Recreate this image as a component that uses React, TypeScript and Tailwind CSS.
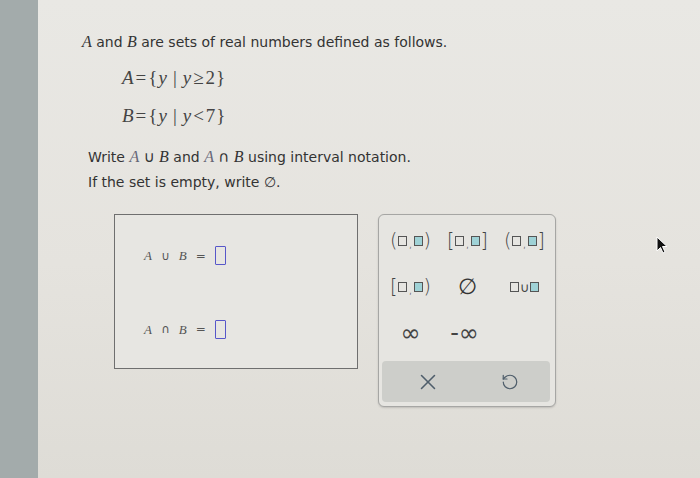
import { X, RotateCcw } from 'lucide-react';

const serif = "font-['Liberation_Serif',serif]";

function Slot({ filled = false }: { filled?: boolean }) {
  return (
    <span
      className={`inline-block w-[9px] h-[10px] border-[1.4px] border-[#555] ${filled ? 'bg-[#9fd2d6]' : 'bg-transparent'}`}
    />
  );
}

function Interval({ left, right }: { left: string; right: string }) {
  return (
    <span className="flex items-center text-[19px] leading-none text-[#444] font-['DejaVu_Sans',sans-serif] font-light">
      <span className="-mt-[2px]">{left}</span>
      <span className="flex items-center mx-[1px]">
        <Slot />
        <span className="text-[13px] leading-[10px] h-[10px] flex items-end translate-y-[3px] mx-[1px]">,</span>
        <Slot filled />
      </span>
      <span className="-mt-[2px]">{right}</span>
    </span>
  );
}

function Answer({ op }: { op: string }) {
  return (
    <div className={`flex items-center gap-[9px] text-[13px] text-[#555] ${serif}`}>
      <span className="italic">A</span>
      <span className="font-['DejaVu_Sans',sans-serif] text-[12px]">{op}</span>
      <span className="italic">B</span>
      <span className="font-['DejaVu_Sans',sans-serif] text-[12px]">=</span>
      <span className="inline-block w-[11px] h-[19px] border-[1.5px] border-[#5757c9] rounded-[1px]" />
    </div>
  );
}

function SetDef({ name, rel, num }: { name: string; rel: string; num: string }) {
  return (
    <div className="flex items-center">
      <span className="italic">{name}</span>
      <span className="mx-[2px]">=</span>
      <span>{'{'}</span>
      <span className="italic ml-[1px]">y</span>
      <span className="mx-[6px]">|</span>
      <span className="italic">y</span>
      <span className="mx-[2px]">{rel}</span>
      <span>{num}</span>
      <span className="ml-[1px]">{'}'}</span>
    </div>
  );
}

export default function App() {
  return (
    <div className="w-[700px] h-[478px] flex overflow-hidden bg-[#e4e2dd]">
      <div className="w-[38px] shrink-0 bg-[#a3abab]" />
      <div className="relative flex-1 flex flex-col pl-[44px] pt-[31px] text-[#333] font-['DejaVu_Sans',sans-serif] bg-[linear-gradient(180deg,#e9e8e4_0%,#e5e3de_55%,#dedcd6_100%)]">
        <p className="text-[14px] leading-[22px]">
          <span className={`${serif} italic text-[16px]`}>A</span> and{' '}
          <span className={`${serif} italic text-[16px]`}>B</span> are sets of real numbers defined as follows.
        </p>

        <div className={`${serif} text-[19px] text-[#444] ml-[40px] mt-[14px] flex flex-col gap-[16px] leading-[22px]`}>
          <SetDef name="A" rel="≥" num="2" />
          <SetDef name="B" rel="<" num="7" />
        </div>

        <div className="ml-[6px] mt-[17px] text-[14px] leading-[25px]">
          <p>
            Write <span className={`${serif} italic text-[16px] text-[#667]`}>A</span>{' '}
            <span className="text-[15px]">∪</span> <span className={`${serif} italic text-[16px]`}>B</span> and{' '}
            <span className={`${serif} italic text-[16px] text-[#667]`}>A</span>{' '}
            <span className="text-[15px]">∩</span> <span className={`${serif} italic text-[16px]`}>B</span> using interval
            notation.
          </p>
          <p>If the set is empty, write ∅.</p>
        </div>

        <div className="flex items-start gap-[20px] ml-[32px] mt-[19px]">
          <div className="w-[244px] h-[155px] border border-[#6f6f6f] bg-[#e7e6e2] pl-[29px] pt-[31px] flex flex-col gap-[54px]">
            <Answer op="∪" />
            <Answer op="∩" />
          </div>

          <div className="w-[178px] h-[193px] rounded-[6px] border border-[#a6a6a4] bg-[#e6e5e1] shadow-[0_1px_2px_rgba(0,0,0,0.15)] flex flex-col px-[3px] pt-[3px]">
            <div className="grid grid-cols-[57px_57px_57px] grid-rows-[46px_46px_46px] items-center justify-items-center text-[#444]">
              <Interval left="(" right=")" />
              <Interval left="[" right="]" />
              <Interval left="(" right="]" />
              <Interval left="[" right=")" />
              <span className="text-[22px] leading-none font-['DejaVu_Sans',sans-serif] text-[#333]">∅</span>
              <span className="flex items-center gap-[1px] text-[13px] leading-none">
                <Slot />
                <span>∪</span>
                <Slot filled />
              </span>
              <span className="text-[24px] leading-none">∞</span>
              <span className="text-[24px] leading-none -ml-[6px]">-∞</span>
              <span />
            </div>
            <div className="mt-[5px] mr-[2px] h-[41px] rounded-[4px] bg-[#cdceca] grid grid-cols-2 items-center justify-items-center">
              <X size={26} strokeWidth={1.4} className="text-[#4f5e6b] ml-[8px]" />
              <RotateCcw size={18} strokeWidth={1.6} className="text-[#4f5e6b] ml-[4px]" />
            </div>
          </div>
        </div>

        <svg className="absolute left-[617px] top-[236px]" width="14" height="18" viewBox="0 0 14 18">
          <path d="M2 1 L2 15 L5.5 11.5 L8 17 L10 16 L7.5 10.5 L12 10.5 Z" fill="#111" stroke="#fff" strokeWidth="1" />
        </svg>
      </div>
    </div>
  );
}
